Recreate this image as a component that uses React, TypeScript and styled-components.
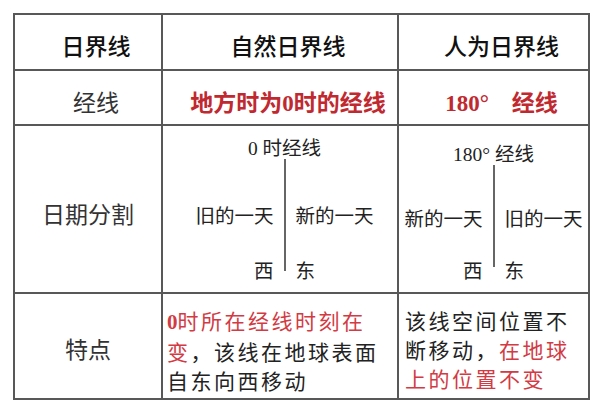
import styled, { createGlobalStyle } from 'styled-components';

const GlobalStyle = createGlobalStyle`
  html, body {
    margin: 0;
    padding: 0;
    background: #fff;
  }
  body {
    font-family: 'Noto Sans CJK SC', sans-serif;
    color: #222;
  }
`;

const Page = styled.div`
  padding: 13px 0 0 13px;
`;

// grid gap + background draws the table rules
const Table = styled.div`
  display: grid;
  grid-template-columns: 146px 234px 189px;
  grid-template-rows: 54px 53px 166px 104px;
  gap: 2px;
  padding: 2px;
  width: max-content;
  background: #585858;
`;

const Cell = styled.div<{ $padLeft?: number; $padTop?: number; $start?: boolean }>`
  box-sizing: border-box;
  background: #fff;
  display: flex;
  align-items: ${({ $start }) => ($start ? 'flex-start' : 'center')};
  justify-content: ${({ $start }) => ($start ? 'flex-start' : 'center')};
  padding-left: ${({ $padLeft }) => $padLeft ?? 0}px;
  padding-top: ${({ $padTop }) => $padTop ?? 0}px;
`;

const HeadText = styled.div`
  font-size: 23px;
  font-weight: 500;
  color: #111;
  white-space: nowrap;
`;

const Label = styled.div`
  font-size: 23px;
  color: #333;
  white-space: nowrap;
`;

const RedSerif = styled.div`
  font-family: 'Liberation Serif', 'Noto Sans CJK SC', serif;
  font-size: 23px;
  font-weight: 700;
  color: #c0292f;
  white-space: nowrap;
`;

const Diagram = styled.div<{ $top: number }>`
  display: flex;
  flex-direction: column;
  align-items: center;
  align-self: flex-start;
  padding-top: ${({ $top }) => $top}px;
  font-family: 'Liberation Serif', 'Noto Sans CJK SC', serif;
  font-size: 19.5px;
  color: #222;
`;

const Meridian = styled.div`
  line-height: 20px;
  white-space: nowrap;
`;

const Split = styled.div<{ $len: number }>`
  display: grid;
  grid-template-columns: auto 2px auto;
  column-gap: 10px;
  height: ${({ $len }) => $len}px;
`;

const Line = styled.div`
  background: #666;
`;

const Side = styled.div<{ $right?: boolean }>`
  display: grid;
  grid-template-rows: 1fr auto;
  justify-items: ${({ $right }) => ($right ? 'start' : 'end')};
`;

const Day = styled.div`
  padding-top: 8px;
  align-self: center;
  white-space: nowrap;
`;

const Dir = styled.div<{ $drop: number }>`
  line-height: 22px;
  margin-bottom: ${({ $drop }) => -(11 + $drop)}px;
`;

const Note = styled.div<{ $padLeft: number }>`
  padding: 12px 0 0 ${({ $padLeft }) => $padLeft}px;
  font-size: 21px;
  line-height: 29px;
  letter-spacing: 2.5px;
  color: #222;
  white-space: nowrap;
`;

const NoteLine = styled.div``;

const Hot = styled.span`
  color: #d23a44;
`;

const Zero = styled.span`
  font-family: 'Liberation Serif', serif;
  font-weight: 700;
  letter-spacing: 0;
`;

type SplitProps = {
  top: number;
  len: number;
  drop: number;
  meridian: string;
  west: string;
  east: string;
};

const DateSplit = ({ top, len, drop, meridian, west, east }: SplitProps) => (
  <Diagram $top={top}>
    <Meridian>{meridian}</Meridian>
    <Split $len={len}>
      <Side>
        <Day>{west}</Day>
        <Dir $drop={drop}>西</Dir>
      </Side>
      <Line />
      <Side $right>
        <Day>{east}</Day>
        <Dir $drop={drop}>东</Dir>
      </Side>
    </Split>
  </Diagram>
);

const App = () => {
  return (
    <Page>
      <GlobalStyle />
      <Table>
        <Cell $padLeft={16} $padTop={6}>
          <HeadText>日界线</HeadText>
        </Cell>
        <Cell $padLeft={16} $padTop={6}>
          <HeadText>自然日界线</HeadText>
        </Cell>
        <Cell $padLeft={16} $padTop={6}>
          <HeadText>人为日界线</HeadText>
        </Cell>

        <Cell $padLeft={16} $padTop={6}>
          <Label>经线</Label>
        </Cell>
        <Cell $padLeft={16} $padTop={6}>
          <RedSerif>地方时为0时的经线</RedSerif>
        </Cell>
        <Cell $padLeft={16} $padTop={6}>
          <RedSerif>180°　经线</RedSerif>
        </Cell>

        <Cell $padTop={8}>
          <Label>日期分割</Label>
        </Cell>
        <Cell $padLeft={9}>
          <DateSplit top={13} len={112} drop={1} meridian="0 时经线" west="旧的一天" east="新的一天" />
        </Cell>
        <Cell>
          <DateSplit top={19} len={102} drop={5} meridian="180° 经线" west="新的一天" east="旧的一天" />
        </Cell>

        <Cell $padTop={4}>
          <Label>特点</Label>
        </Cell>
        <Cell $start>
          <Note $padLeft={4}>
            <NoteLine>
              <Hot>
                <Zero>0</Zero>时所在经线时刻在
              </Hot>
            </NoteLine>
            <NoteLine>
              <Hot>变</Hot>，该线在地球表面
            </NoteLine>
            <NoteLine>自东向西移动</NoteLine>
          </Note>
        </Cell>
        <Cell $start>
          <Note $padLeft={6}>
            <NoteLine>该线空间位置不</NoteLine>
            <NoteLine>
              断移动，<Hot>在地球</Hot>
            </NoteLine>
            <NoteLine>
              <Hot>上的位置不变</Hot>
            </NoteLine>
          </Note>
        </Cell>
      </Table>
    </Page>
  );
};

export default App;
